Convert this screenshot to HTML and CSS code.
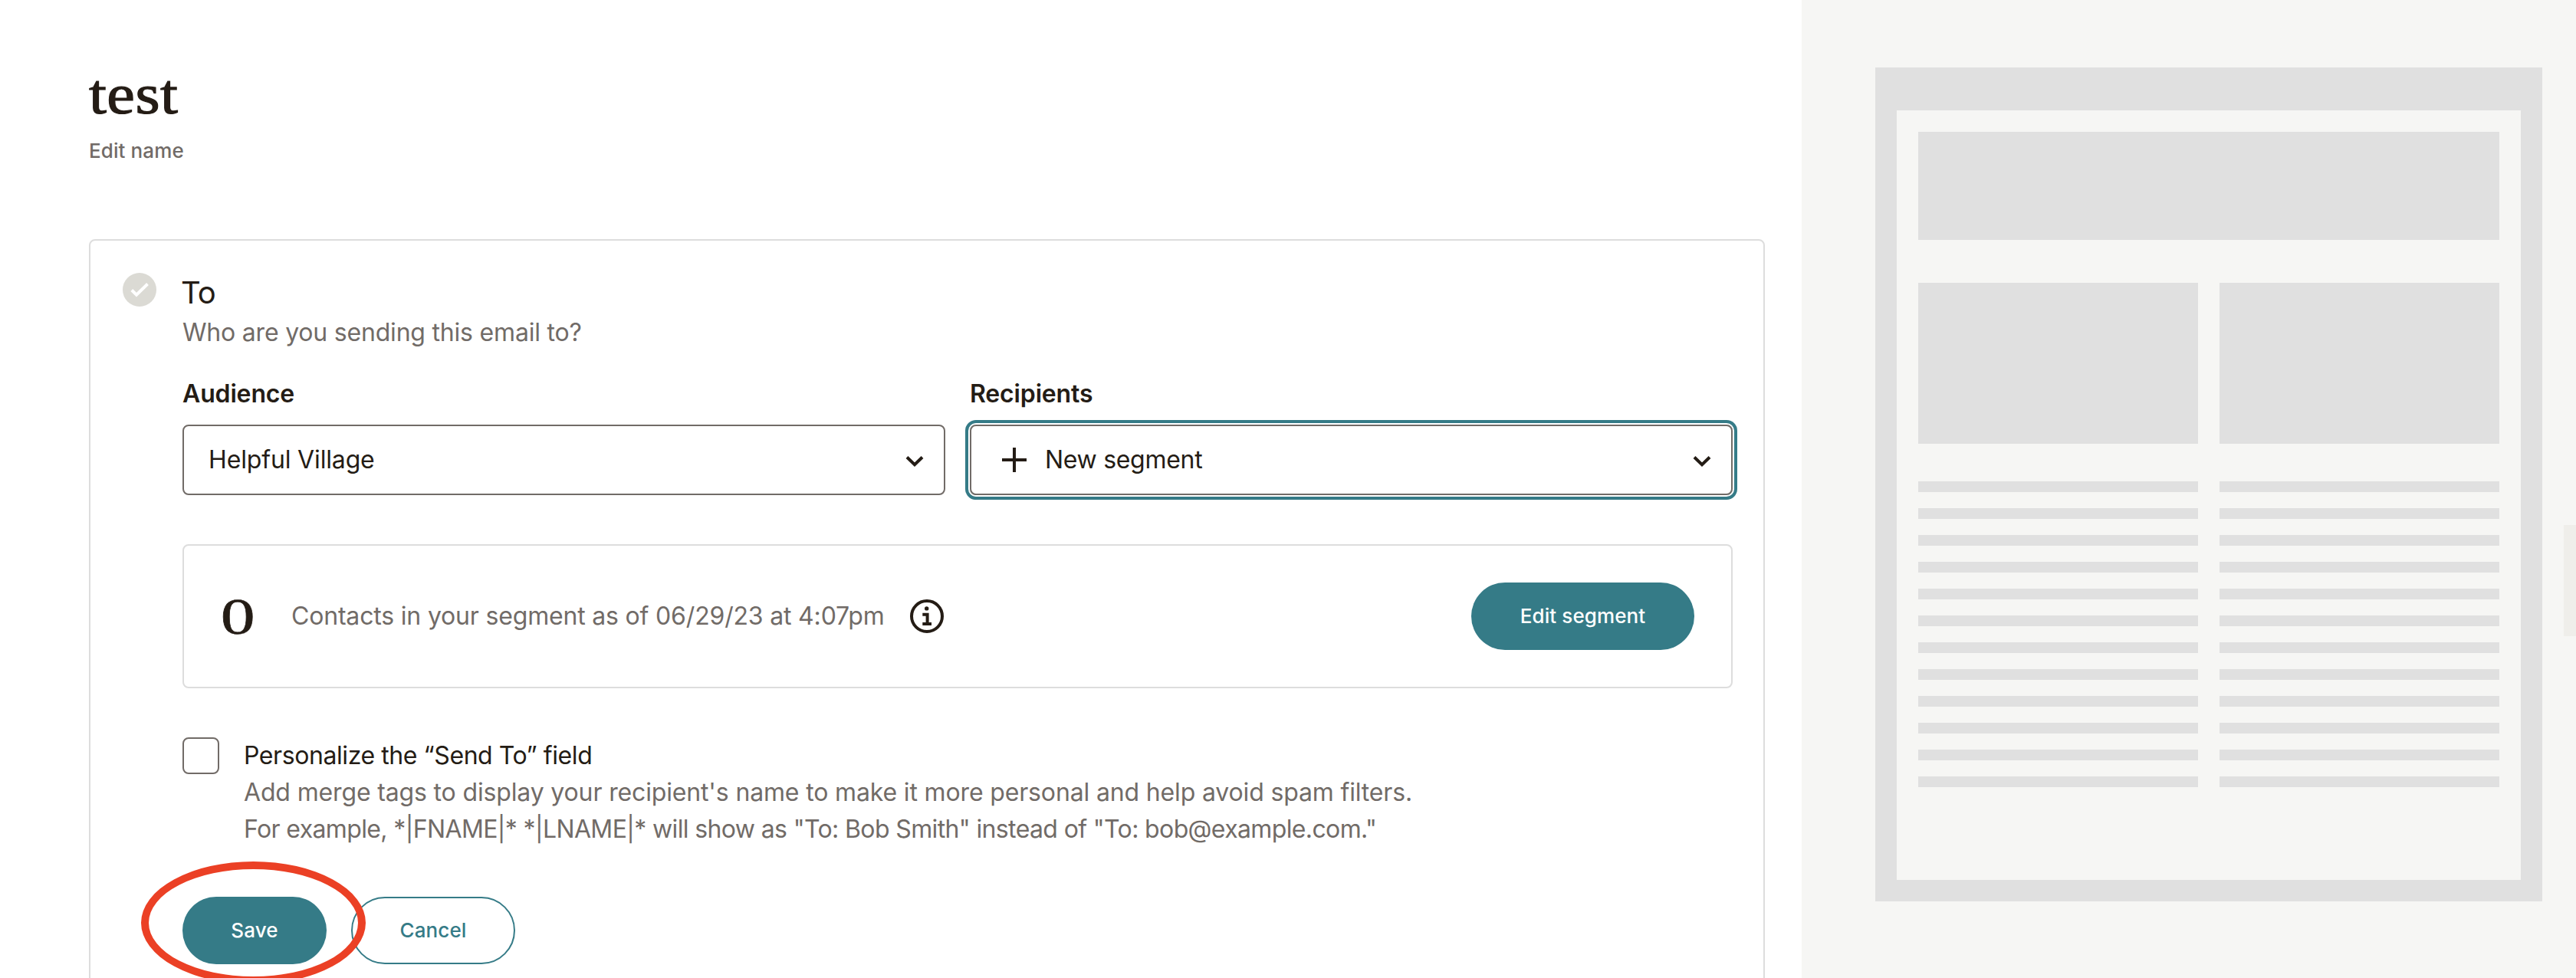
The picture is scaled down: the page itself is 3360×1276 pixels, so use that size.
FILE: index.html
```html
<!DOCTYPE html>
<html lang="en">
<head>
  <meta charset="UTF-8">
  <meta name="viewport" content="width=device-width, initial-scale=1.0">
  <title>test</title>
  <link rel="stylesheet" href="styles.css">
</head>
<body>
  <div class="page">
    <main class="builder">
      <h1 class="campaign-name">test</h1>
      <a class="edit-name">Edit name</a>

      <section class="card">
        <svg class="status" viewBox="0 0 44 44">
          <circle cx="22" cy="22" r="22" fill="#dbdad4" />
          <path d="M11.8 22.5 L18 28.6 L32.5 14.5" fill="none" stroke="#fff" stroke-width="4" />
        </svg>

        <div class="card-body">
          <h2 class="card-title">To</h2>
          <p class="card-subtitle">Who are you sending this email to?</p>

          <div class="fields">
            <div class="field">
              <label class="label">Audience</label>
              <div class="select">
                <span class="value">Helpful Village</span>
                <svg class="chevron" viewBox="0 0 24 16">
                  <path d="M2 2.5 L12 12.3 L22 2.5" fill="none" stroke="#241c15" stroke-width="4" />
                </svg>
              </div>
            </div>
            <div class="field">
              <label class="label">Recipients</label>
              <div class="select focused">
                <svg class="plus" viewBox="0 0 32 32">
                  <path d="M16 0 V32 M0 16 H32" stroke="#241c15" stroke-width="4" />
                </svg>
                <span class="value segment-value">New segment</span>
                <svg class="chevron" viewBox="0 0 24 16">
                  <path d="M2 2.5 L12 12.3 L22 2.5" fill="none" stroke="#241c15" stroke-width="4" />
                </svg>
              </div>
            </div>
          </div>

          <div class="segment">
            <span class="count">0</span>
            <span class="segment-text">Contacts in your segment as of 06/29/23 at 4:07pm</span>
            <svg class="info" viewBox="0 0 44 44">
              <circle cx="22" cy="22" r="20" fill="none" stroke="#241c15" stroke-width="4" />
              <circle cx="21.7" cy="11.9" r="2.7" fill="#241c15" />
              <path d="M16.3 19.8 H22.6 V32 M16.3 32 H28" fill="none" stroke="#241c15" stroke-width="4" />
            </svg>
            <button class="button edit-segment">Edit segment</button>
          </div>

          <div class="personalize">
            <span class="checkbox"></span>
            <div class="personalize-text">
              <p class="personalize-title">Personalize the “Send To” field</p>
              <p>Add merge tags to display your recipient's name to make it more personal and help avoid spam filters.</p>
              <p class="example">For example, *|FNAME|* *|LNAME|* will show as "To: Bob Smith" instead of "To: bob@example.com."</p>
            </div>
          </div>

          <div class="actions">
            <button class="button save">Save</button>
            <button class="button cancel">Cancel</button>
            <div class="highlight"></div>
          </div>
        </div>
      </section>
    </main>

    <aside class="preview">
      <div class="mail">
        <div class="mail-inner">
          <div class="block banner"></div>
          <div class="columns">
            <div class="block image"></div>
            <div class="block image"></div>
          </div>
          <div class="columns">
            <div class="lines"><i></i><i></i><i></i><i></i><i></i><i></i><i></i><i></i><i></i><i></i><i></i><i></i></div>
            <div class="lines"><i></i><i></i><i></i><i></i><i></i><i></i><i></i><i></i><i></i><i></i><i></i><i></i></div>
          </div>
        </div>
      </div>
      <div class="feedback-tab"></div>
    </aside>
  </div>
</body>
</html>
```
FILE: styles.css
```css
* {
  box-sizing: border-box;
}
body {
  margin: 0;
  background-color: #fff;
  color: #241c15;
  font-family: Inter, "Liberation Sans", sans-serif;
  font-size: 32px;
  line-height: 48px;
  letter-spacing: -0.15px;
}
h1, h2, p {
  margin: 0;
  font-weight: 400;
}
svg {
  display: block;
  flex: none;
}
.page {
  display: flex;
  height: 1276px;
  overflow: hidden;
}
.builder {
  width: 2350px;
  flex: none;
  padding: 84px 48px 0 116px;
}
.campaign-name {
  font-family: "Liberation Serif", Georgia, serif;
  font-size: 73px;
  line-height: 80px;
  letter-spacing: 0.4px;
  -webkit-text-stroke: 1.2px #241c15;
  transform: scaleX(1.13);
  transform-origin: left;
}
.edit-name {
  display: block;
  margin: 13px 0 95px;
  font-size: 26px;
  font-weight: 500;
  line-height: 40px;
  letter-spacing: 0.1px;
  color: #716b67;
}

/* Recipients card */
.card {
  display: flex;
  gap: 34px;
  height: 1100px;
  padding: 40px 40px 0 42px;
  border: 2px solid #dddddd;
  border-radius: 8px;
}
.status {
  width: 44px;
  height: 44px;
  margin-top: 2px;
}
.card-body {
  flex: 1;
}
.card-title {
  margin-left: -2px;
  font-size: 40px;
  line-height: 56px;
  letter-spacing: -1px;
}
.card-subtitle {
  color: #716b67;
  letter-spacing: -0.2px;
}
.fields {
  display: flex;
  gap: 32px;
  margin-top: 32px;
}
.field {
  flex: 1;
}
.label {
  display: block;
  margin-bottom: 16px;
  font-weight: 600;
}
.select {
  display: flex;
  align-items: center;
  height: 92px;
  padding: 0 26px 0 32px;
  border: 2px solid #716b67;
  border-radius: 8px;
}
.focused {
  padding-left: 40px;
  box-shadow: 0 0 0 2px #fff, 0 0 0 6px #357b87;
}
.value {
  flex: 1;
}
.plus {
  width: 32px;
  height: 32px;
  margin-right: 24px;
}
.segment-value {
  letter-spacing: -0.3px;
}
.chevron {
  width: 24px;
  height: 16px;
  margin-top: 4px;
}

/* Segment summary */
.segment {
  display: flex;
  align-items: center;
  height: 188px;
  margin-top: 64px;
  padding: 0 48px;
  border: 2px solid #dddddd;
  border-radius: 8px;
}
.count {
  width: 44px;
  font-family: "Liberation Serif", Georgia, serif;
  font-size: 68px;
  text-align: center;
  line-height: 80px;
  -webkit-text-stroke: 0.6px #241c15;
  transform: scaleX(1.32);
}
.segment-text {
  margin-left: 48px;
  color: #716b67;
  letter-spacing: -0.18px;
}
.info {
  width: 44px;
  height: 44px;
  margin-left: 33px;
}
.button {
  height: 88px;
  border: none;
  border-radius: 44px;
  background-color: #357b87;
  color: #fff;
  font: 500 26px/40px Inter, "Liberation Sans", sans-serif;
  letter-spacing: 0.1px;
}
.edit-segment {
  width: 291px;
  margin-left: auto;
}

/* Personalize option */
.personalize {
  display: flex;
  gap: 32px;
  margin-top: 64px;
  color: #716b67;
}
.checkbox {
  width: 48px;
  height: 48px;
  border: 2px solid #716b67;
  border-radius: 8px;
}
.personalize-title {
  color: #241c15;
  letter-spacing: -0.42px;
}
.example {
  letter-spacing: -0.63px;
}
.actions {
  position: relative;
  display: flex;
  gap: 32px;
  margin-top: 64px;
}
.save {
  width: 188px;
}
.cancel {
  width: 214px;
  border: 2px solid #357b87;
  background-color: #fff;
  color: #357b87;
}
/* Red ring drawn around the Save button */
.highlight {
  position: absolute;
  left: -54px;
  top: -46px;
  width: 293px;
  height: 160px;
  border: 10px solid #eb4025;
  border-radius: 50%;
}

/* Email preview placeholder */
.preview {
  position: relative;
  flex: 1;
  padding: 88px 44px 0 96px;
  background-color: #f6f6f4;
}
.mail {
  height: 1088px;
  padding: 56px 28px 28px;
  background-color: #e0e0e0;
}
.mail-inner {
  height: 1004px;
  padding: 28px 28px 0;
  background-color: #f6f6f4;
}
.block {
  background-color: #e0e0e0;
}
.banner {
  height: 140.5px;
  margin-bottom: 56px;
}
.columns {
  display: flex;
  gap: 28px;
}
.image {
  flex: 1;
  height: 210.5px;
  margin-bottom: 49px;
}
.lines {
  flex: 1;
  display: flex;
  flex-direction: column;
  gap: 21px;
}
.lines i {
  height: 14px;
  background-color: #e0e0e0;
}
.feedback-tab {
  position: absolute;
  right: 0;
  top: 685px;
  width: 16px;
  height: 145px;
  background-color: #efeeea;
}
```
